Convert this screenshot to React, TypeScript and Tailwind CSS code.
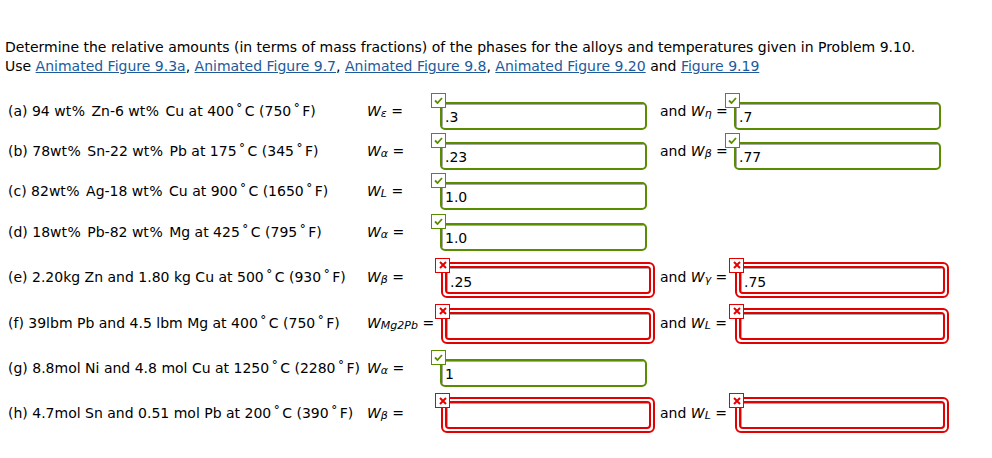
import React from "react";

type Ans = { value: string; ok: boolean };
type RowData = {
  label: string;
  w: React.ReactNode;
  a: Ans;
  and?: React.ReactNode;
  b?: Ans;
  h: string;
};

const W = ({ sub }: { sub: string }) => (
  <span className="italic whitespace-nowrap">
    W<sub className="text-[11px] italic relative top-[1px]">{sub}</sub>
  </span>
);

const Label = ({ text }: { text: string }) => {
  const parts = text.split(/(˚|%)/);
  return (
    <>
      {parts.map((p, i) =>
        p === "˚" ? (
          <span key={i} className="mx-[2px]">
            ˚
          </span>
        ) : p === "%" ? (
          <span key={i} className="ml-[0.5px] mr-[2px]">
            %
          </span>
        ) : (
          <React.Fragment key={i}>{p}</React.Fragment>
        )
      )}
    </>
  );
};

const CheckIcon = () => (
  <div className="absolute top-0 left-0 w-[15px] h-[15px] border border-[#5a8c00] bg-white flex items-center justify-center">
    <svg width="9" height="7" viewBox="0 0 9 7">
      <path d="M1 3.5 L3.5 6 L8 1" fill="none" stroke="#5a8c00" strokeWidth="1.8" />
    </svg>
  </div>
);

const XIcon = () => (
  <div className="absolute top-0 left-0 w-[15px] h-[15px] border border-[#e30000] bg-white flex items-center justify-center">
    <svg width="8" height="8" viewBox="0 0 8 8">
      <path d="M1 1 L7 7 M7 1 L1 7" fill="none" stroke="#e30000" strokeWidth="2" />
    </svg>
  </div>
);

const Widget = ({ ans }: { ans: Ans }) =>
  ans.ok ? (
    <div className="relative pt-[9px] pl-[9px] w-[216px]">
      <div className="w-[207px] h-[28px] border-2 border-[#5a8c00] rounded-[5px] bg-white overflow-hidden">
        <div className="w-full h-full border-t border-l border-[#a9a9a9] rounded-tl-[3px] pl-[2px] pt-[4px] text-[14px] leading-[17px] text-black">
          {ans.value}
        </div>
      </div>
      <CheckIcon />
    </div>
  ) : (
    <div className="relative pt-[4px] pl-[6px] w-[220px] ml-[4px]">
      <div className="w-[214px] h-[36px] border-2 border-[#e30000] rounded-[6px] bg-white p-[2px]">
        <div className="w-full h-full border-2 border-[#e30000] rounded-[4px] overflow-hidden">
          <div className="w-full h-full border-t border-l border-[#a9a9a9] pl-[2px] pt-[5px] text-[14px] leading-[17px] text-black">
            {ans.value}
          </div>
        </div>
      </div>
      <XIcon />
    </div>
  );

const rows: RowData[] = [
  {
    label: "(a) 94 wt% Zn-6 wt% Cu at 400˚C (750˚F)",
    w: <W sub="ε" />,
    a: { value: ".3", ok: true },
    and: <W sub="η" />,
    b: { value: ".7", ok: true },
    h: "h-[40px]",
  },
  {
    label: "(b) 78wt% Sn-22 wt% Pb at 175˚C (345˚F)",
    w: <W sub="α" />,
    a: { value: ".23", ok: true },
    and: <W sub="β" />,
    b: { value: ".77", ok: true },
    h: "h-[40px]",
  },
  {
    label: "(c) 82wt% Ag-18 wt% Cu at 900˚C (1650˚F)",
    w: <W sub="L" />,
    a: { value: "1.0", ok: true },
    h: "h-[40px]",
  },
  {
    label: "(d) 18wt% Pb-82 wt% Mg at 425˚C (795˚F)",
    w: <W sub="α" />,
    a: { value: "1.0", ok: true },
    h: "h-[43px]",
  },
  {
    label: "(e) 2.20kg Zn and 1.80 kg Cu at 500˚C (930˚F)",
    w: <W sub="β" />,
    a: { value: ".25", ok: false },
    and: <W sub="γ" />,
    b: { value: ".75", ok: false },
    h: "h-[47px]",
  },
  {
    label: "(f) 39lbm Pb and 4.5 lbm Mg at 400˚C (750˚F)",
    w: <W sub="Mg2Pb" />,
    a: { value: "", ok: false },
    and: <W sub="L" />,
    b: { value: "", ok: false },
    h: "h-[45px]",
  },
  {
    label: "(g) 8.8mol Ni and 4.8 mol Cu at 1250˚C (2280˚F)",
    w: <W sub="α" />,
    a: { value: "1", ok: true },
    h: "h-[44px]",
  },
  {
    label: "(h) 4.7mol Sn and 0.51 mol Pb at 200˚C (390˚F)",
    w: <W sub="β" />,
    a: { value: "", ok: false },
    and: <W sub="L" />,
    b: { value: "", ok: false },
    h: "h-[46px]",
  },
];

const Link = ({ children }: { children: React.ReactNode }) => (
  <span className="text-[#1c5a9c] underline">{children}</span>
);

export default function App() {
  return (
    <div
      className="w-[992px] h-[458px] bg-white text-black text-[14px] overflow-hidden"
      style={{ fontFamily: '"DejaVu Sans", Verdana, sans-serif' }}
    >
      <div className="pt-[38px] pl-[5px] leading-[19px]">
        <div>
          Determine the relative amounts (in terms of mass fractions) of the phases for the alloys and temperatures given in Problem 9.10.
        </div>
        <div>
          Use <Link>Animated Figure 9.3a</Link>, <Link>Animated Figure 9.7</Link>, <Link>Animated Figure 9.8</Link>,{" "}
          <Link>Animated Figure 9.20</Link> and <Link>Figure 9.19</Link>
        </div>
      </div>
      <div className="mt-[15px] flex flex-col">
        {rows.map((r, i) => (
          <div key={i} className={`flex items-center ${r.h}`}>
            <div className="w-[367px] pl-[8px] whitespace-nowrap">
              <Label text={r.label} />
            </div>
            <div className="w-[64px] whitespace-nowrap">
              {r.w} =
            </div>
            <div className="w-[229px]">
              <Widget ans={r.a} />
            </div>
            {r.b && (
              <>
                <div className="w-[65px] whitespace-nowrap">
                  and {r.and} =
                </div>
                <Widget ans={r.b} />
              </>
            )}
          </div>
        ))}
      </div>
    </div>
  );
}
